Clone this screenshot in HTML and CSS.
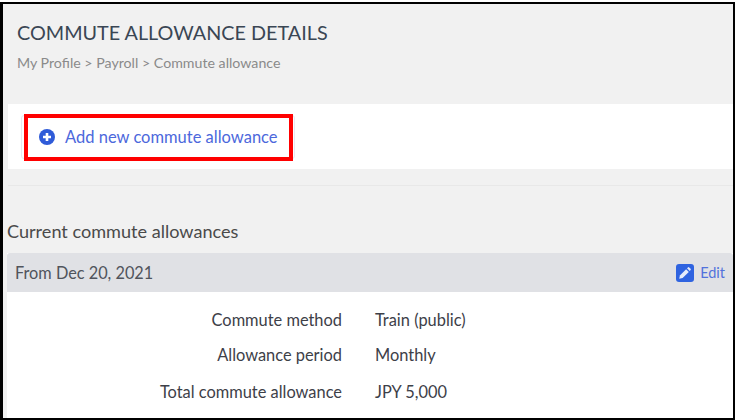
FILE: index.html
```html
<!DOCTYPE html>
<html lang="en">
<head>
<meta charset="utf-8">
<title>Commute allowance details</title>
<link rel="stylesheet" href="styles.css">
</head>
<body>
<div class="frame">
  <header class="page-head">
    <h1 class="page-title">COMMUTE ALLOWANCE DETAILS</h1>
    <p class="crumbs">My Profile &gt; Payroll &gt; Commute allowance</p>
  </header>
  <section class="action-band">
    <a class="add-btn">
      <svg class="plus" viewBox="0 0 16 16" width="16" height="16"><circle cx="8" cy="8" r="8" fill="#2f5bd8"/><path d="M8 4v8M4 8h8" stroke="#fff" stroke-width="2.6"/></svg>
      <span>Add new commute allowance</span>
    </a>
    <div class="highlight"></div>
  </section>
  <div class="rule"></div>
  <h2 class="section-title">Current commute allowances</h2>
  <section class="card">
    <div class="card-head">
      <span class="from">From Dec 20, 2021</span>
      <a class="edit">
        <svg viewBox="0 0 18 18" width="18" height="18"><rect width="18" height="18" rx="3" fill="#2f63e0"/><path d="M3.2 14.8l.7-3.4 6.2-6.2 2.7 2.7-6.2 6.2z" fill="#e6ecfb"/><path d="M11 4.3l.9-.9a1 1 0 0 1 1.3 0l1.4 1.4a1 1 0 0 1 0 1.3l-.9.9z" fill="#e6ecfb"/></svg>
        <span>Edit</span>
      </a>
    </div>
    <dl class="details">
      <div class="row r1"><dt>Commute method</dt><dd>Train (public)</dd></div>
      <div class="row r2"><dt>Allowance period</dt><dd>Monthly</dd></div>
      <div class="row r3"><dt>Total commute allowance</dt><dd>JPY 5,000</dd></div>
    </dl>
  </section>
</div>
</body>
</html>
```
FILE: styles.css
```css
* { box-sizing: border-box; }
html, body { margin: 0; padding: 0; }
body { width: 735px; height: 420px; overflow: hidden; background: #fff; font-family: "Lato", "Liberation Sans", sans-serif; }
.frame { width: 735px; height: 418px; margin-top: 2px; border: solid #000; border-width: 2px 2px 2px 3px; background: #f1f1f1; overflow: hidden; }
.page-head { height: 100px; padding: 14px 0 0 14px; }
.page-title { margin: 0; font-size: 19.8px; line-height: 28px; font-weight: 400; color: #3a4654; }
.crumbs { margin: 8px 0 0; font-size: 14.2px; line-height: 18px; color: #8a8a8a; }
.action-band { position: relative; margin-left: 5px; height: 65px; background: #fff; padding: 11px 0 0 13px; }
.add-btn { display: flex; align-items: center; gap: 10px; width: 274px; height: 44px; padding-left: 17px; border: 1px solid #e6e8f2; border-radius: 3px; font-size: 16.5px; color: #4c68dc; }
.highlight { position: absolute; left: 16px; top: 10px; width: 269px; height: 47px; border: 4px solid #f00; }
.rule { height: 1px; margin: 16px 0 0 5px; background: #e8e8e8; }
.section-title { margin: 34px 0 0 4px; font-size: 18.1px; line-height: 22px; font-weight: 400; color: #4a4a4a; }
.card { margin: 11px 0 0 4px; background: #fff; height: 170px; }
.card-head { display: flex; align-items: center; justify-content: space-between; height: 39px; padding: 0 8px; background: #e0e1e5; border-radius: 3px 3px 0 0; }
.from { font-size: 16.3px; color: #50545c; }
.edit { display: flex; align-items: center; gap: 6px; font-size: 14.5px; color: #5272dc; }
.details { margin: 0; padding-top: 18px; }
.row { display: grid; grid-template-columns: 335px 1fr; column-gap: 33px; font-size: 16.4px; line-height: 20px; }
.r2 { margin-top: 15px; }
.r3 { margin-top: 17px; }
.row dt { text-align: right; color: #3d4048; }
.row dd { margin: 0; color: #3d4048; }
```
